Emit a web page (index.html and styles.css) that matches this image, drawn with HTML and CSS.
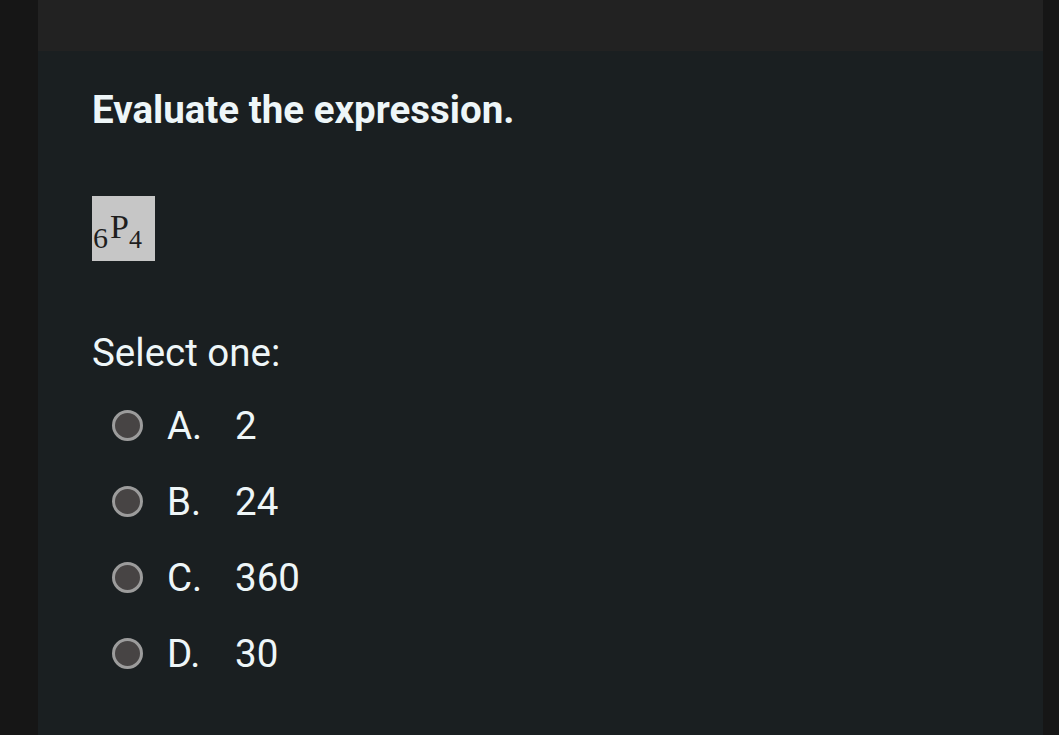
FILE: index.html
```html
<!DOCTYPE html>
<html lang="en">
<head>
  <meta charset="UTF-8" />
  <title>Question</title>
  <link rel="stylesheet" href="styles.css">
</head>
<body>
  <div class="page">
    <div class="topbar"></div>
    <div class="question">
      <h2 class="qtext">Evaluate the expression.</h2>
      <div class="expr"><span class="sub six">6</span><span class="big">P</span><span class="sub">4</span></div>
      <div class="prompt">Select one:</div>
      <div class="answers">
        <label class="answer"><span class="radio"></span><span class="letter">A.</span><span>2</span></label>
        <label class="answer"><span class="radio"></span><span class="letter">B.</span><span>24</span></label>
        <label class="answer"><span class="radio"></span><span class="letter">C.</span><span>360</span></label>
        <label class="answer"><span class="radio"></span><span class="letter">D.</span><span>30</span></label>
      </div>
    </div>
  </div>
</body>
</html>
```

FILE: styles.css
```css
html, body { margin: 0; height: 100%; }
body { background: #161616; font-family: Roboto, "Liberation Sans", sans-serif; color: #eef6f8; overflow: hidden; }
.page { margin: 0 16px 0 38px; height: 100%; display: flex; flex-direction: column; }
.topbar { height: 51px; flex-shrink: 0; background: #222222; }
.question { flex: 1; background: #1a1f21; padding: 33px 54px 0 54px; }
.qtext { margin: 0; font-size: 38.5px; font-weight: 700; line-height: 52px; }
.expr { margin-top: 60px; width: 63px; height: 65px; background: #c6c6c6; color: #1e1e1e; font-family: "Liberation Serif", serif; display: flex; align-items: flex-end; padding: 0 0 8px 1px; box-sizing: border-box; }
.expr .sub { font-size: 26px; line-height: 1; }
.expr .six { font-size: 30px; margin-right: 2px; }
.expr .big { font-size: 34px; line-height: 1; margin-bottom: 9px; }
.prompt { margin-top: 67px; font-size: 38.5px; line-height: 50px; }
.answers { margin-top: 9px; padding-left: 20px; }
.answer { display: flex; align-items: center; height: 76px; font-size: 38.5px; }
.radio { width: 25px; height: 25px; border: 3px solid #9c9c9c; border-radius: 50%; background: #474444; margin-right: 24px; }
.letter { width: 68px; }
```
